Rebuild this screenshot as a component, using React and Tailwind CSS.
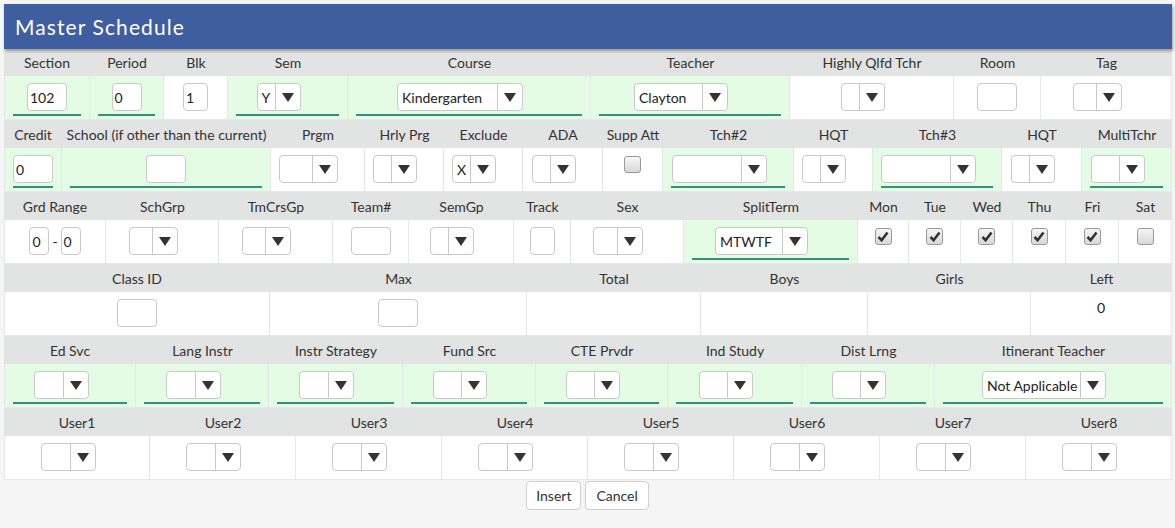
import React from 'react';

const Tri = () => (
  <svg width="12" height="9" viewBox="0 0 12 9">
    <polygon points="0,0 12,0 6,9" fill="#333" />
  </svg>
);

function Select({ w, text }) {
  return (
    <div className={`flex h-[28px] shrink-0 mr-[18px] rounded-[4px] border border-[#c9c9c9] bg-white ${w}`}>
      <div className="flex-1 flex items-center pl-[4px] text-[14px] text-[#222] whitespace-nowrap overflow-hidden">{text}</div>
      <div className="w-[25px] shrink-0 border-l border-[#c9c9c9] flex items-center justify-center">
        <Tri />
      </div>
    </div>
  );
}

function Input({ w, text }) {
  return (
    <div className={`h-[28px] shrink-0 rounded-[4px] border border-[#c9c9c9] bg-white pl-[2px] flex items-center text-[14px] text-[#222] ${w}`}>
      {text}
    </div>
  );
}

function Check({ checked }) {
  return (
    <div className="mt-[1px] w-[17px] h-[17px] rounded-[3px] border border-[#9a9a9a] bg-linear-to-b from-[#f6f6f6] to-[#d8d8d8] flex items-center justify-center">
      {checked && (
        <svg width="12" height="11" viewBox="0 0 12 11">
          <path d="M1.5 6 L4.6 9.2 L10.5 1.5" fill="none" stroke="#333" strokeWidth="2.6" />
        </svg>
      )}
    </div>
  );
}

function Cell({ green, first, children }) {
  return (
    <div
      className={`${green ? 'bg-[#e3fce3]' : 'bg-white'} border-r border-b border-[#e4e8eb] ${first ? 'border-l' : ''} px-[8px] pt-[7px]`}
    >
      {green ? (
        <div className="flex justify-center border-b-2 border-[#32917f] pb-[3px]">{children}</div>
      ) : (
        <div className="flex justify-center">{children}</div>
      )}
    </div>
  );
}

function Block({ cols, cells, first }) {
  return (
    <>
      <div className={`grid ${cols} bg-[#e2e3e3] ${first ? 'h-[27px]' : 'h-[28px]'}`}>
        {cells.map((c, i) => (
          <div key={i} className="flex items-center justify-center text-[14px] text-[#333] whitespace-nowrap">
            {c.label}
          </div>
        ))}
      </div>
      <div className={`grid ${cols} h-[44px]`}>
        {cells.map((c, i) => (
          <Cell key={i} green={c.green} first={i === 0}>
            {c.el}
          </Cell>
        ))}
      </div>
    </>
  );
}

const row1 = [
  { label: 'Section', green: true, el: <Input w="w-[40px]" text="102" /> },
  { label: 'Period', green: true, el: <Input w="w-[30px]" text="0" /> },
  { label: 'Blk', el: <Input w="w-[25px]" text="1" /> },
  { label: 'Sem', green: true, el: <Select w="w-[44px]" text="Y" /> },
  { label: 'Course', green: true, el: <Select w="w-[126px]" text="Kindergarten" /> },
  { label: 'Teacher', green: true, el: <Select w="w-[94px]" text="Clayton" /> },
  { label: 'Highly Qlfd Tchr', el: <Select w="w-[44px]" /> },
  { label: 'Room', el: <Input w="w-[40px]" /> },
  { label: 'Tag', el: <Select w="w-[49px]" /> },
];

const row2 = [
  { label: 'Credit', green: true, el: <Input w="w-[40px]" text="0" /> },
  { label: 'School (if other than the current)', green: true, el: <Input w="w-[40px]" /> },
  { label: 'Prgm', el: <Select w="w-[59px]" /> },
  { label: 'Hrly Prg', el: <Select w="w-[44px]" /> },
  { label: 'Exclude', el: <Select w="w-[44px]" text="X" /> },
  { label: 'ADA', el: <Select w="w-[44px]" /> },
  { label: 'Supp Att', el: <Check /> },
  { label: 'Tch#2', green: true, el: <Select w="w-[95px]" /> },
  { label: 'HQT', el: <Select w="w-[44px]" /> },
  { label: 'Tch#3', green: true, el: <Select w="w-[95px]" /> },
  { label: 'HQT', el: <Select w="w-[44px]" /> },
  { label: 'MultiTchr', green: true, el: <Select w="w-[54px]" /> },
];

const row3 = [
  {
    label: 'Grd Range',
    el: (
      <div className="flex items-center gap-[3px] text-[14px] text-[#222]">
        <Input w="w-[20px]" text="0" />
        <span>-</span>
        <Input w="w-[20px]" text="0" />
      </div>
    ),
  },
  { label: 'SchGrp', el: <Select w="w-[49px]" /> },
  { label: 'TmCrsGp', el: <Select w="w-[49px]" /> },
  { label: 'Team#', el: <Input w="w-[40px]" /> },
  { label: 'SemGp', el: <Select w="w-[44px]" /> },
  { label: 'Track', el: <Input w="w-[25px]" /> },
  { label: 'Sex', el: <Select w="w-[50px]" /> },
  { label: 'SplitTerm', green: true, el: <Select w="w-[93px]" text="MTWTF" /> },
  { label: 'Mon', el: <Check checked /> },
  { label: 'Tue', el: <Check checked /> },
  { label: 'Wed', el: <Check checked /> },
  { label: 'Thu', el: <Check checked /> },
  { label: 'Fri', el: <Check checked /> },
  { label: 'Sat', el: <Check /> },
];

const row4 = [
  { label: 'Class ID', el: <Input w="w-[40px]" /> },
  { label: 'Max', el: <Input w="w-[40px]" /> },
  { label: 'Total', el: null },
  { label: 'Boys', el: null },
  { label: 'Girls', el: null },
  { label: 'Left', el: <span className="text-[14px] text-[#222] leading-[17px]">0</span> },
];

const row5 = [
  { label: 'Ed Svc', green: true, el: <Select w="w-[55px]" /> },
  { label: 'Lang Instr', green: true, el: <Select w="w-[55px]" /> },
  { label: 'Instr Strategy', green: true, el: <Select w="w-[55px]" /> },
  { label: 'Fund Src', green: true, el: <Select w="w-[54px]" /> },
  { label: 'CTE Prvdr', green: true, el: <Select w="w-[54px]" /> },
  { label: 'Ind Study', green: true, el: <Select w="w-[54px]" /> },
  { label: 'Dist Lrng', green: true, el: <Select w="w-[54px]" /> },
  { label: 'Itinerant Teacher', green: true, el: <Select w="w-[124px]" text="Not Applicable" /> },
];

const row6 = ['User1', 'User2', 'User3', 'User4', 'User5', 'User6', 'User7', 'User8'].map((l) => ({
  label: l,
  el: <Select w="w-[55px]" />,
}));

export default function App() {
  return (
    <div className="min-h-[528px] bg-[#f5f5f5] pt-[4px] font-['Lato','Liberation_Sans',sans-serif]">
      <div className="ml-[4px] w-[1168px]">
        <div className="relative z-10 h-[45px] bg-[#3f5e9f] flex items-center pl-[11px] text-white text-[21px] tracking-[1.1px] shadow-[1px_2px_3px_rgba(0,0,0,0.35)]">
          Master Schedule
        </div>
        <Block first cols="grid-cols-[86px_74px_64px_120px_243px_199px_164px_87px_131px]" cells={row1} />
        <Block cols="grid-cols-[58px_209px_94px_79px_79px_80px_60px_131px_79px_129px_80px_90px]" cells={row2} />
        <Block
          cols="grid-cols-[102px_113px_114px_76px_105px_57px_113px_174px_51px_52px_52px_53px_53px_53px]"
          cells={row3}
        />
        <Block cols="grid-cols-[266px_257px_174px_167px_163px_141px]" cells={row4} />
        <Block cols="grid-cols-[132px_133px_134px_133px_132px_134px_133px_237px]" cells={row5} />
        <Block cols="grid-cols-[146px_146px_146px_146px_146px_146px_146px_146px]" cells={row6} />
      </div>
      <div className="flex justify-center gap-[4px] mt-[1px]">
        <button className="h-[29px] px-[9px] rounded-[4px] border border-[#cfcfcf] bg-white text-[14px] text-[#333]">
          Insert
        </button>
        <button className="h-[29px] px-[10px] rounded-[4px] border border-[#cfcfcf] bg-white text-[14px] text-[#333]">
          Cancel
        </button>
      </div>
    </div>
  );
}
